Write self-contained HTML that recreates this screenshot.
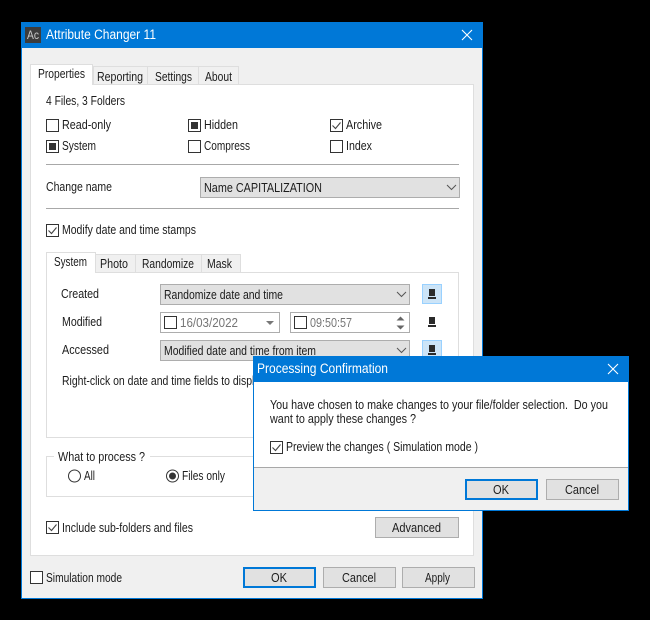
<!DOCTYPE html>
<html lang="en">
<head>
<meta charset="utf-8">
<title>Attribute Changer 11</title>
<style>
html,body{margin:0;padding:0;background:#000;width:650px;height:620px;overflow:hidden}
svg{display:block}
text{font-family:"Liberation Sans",sans-serif;font-size:12.5px;fill:#1c1c1c}
.g{fill:#757575}
.w{fill:#fff;font-size:13.5px}
.bx{fill:#fff;stroke:#333;stroke-width:1}
.ck{fill:none;stroke:#444;stroke-width:1.1}
.tab{fill:#f0f0f0;stroke:#dedede}
.btn{fill:#e1e1e1;stroke:#adadad}
.def{fill:#e1e1e1;stroke:#0078d7;stroke-width:2}
.chev{fill:none;stroke:#555;stroke-width:1}
.sep{stroke:#a8a8a8;stroke-width:1}
</style>
</head>
<body>
<svg width="650" height="620" viewBox="0 0 650 620" xmlns="http://www.w3.org/2000/svg">
<rect width="650" height="620" fill="#000"/>

<!-- main window -->
<rect x="21.500" y="22.500" width="461" height="576" fill="#f0f0f0" stroke="#0078d7"/>
<rect x="22" y="23" width="460" height="25" fill="#0078d7"/>
<rect x="25" y="27" width="16" height="16" fill="#3c3c3c"/>
<text x="27" y="39" style="font-size:12px;fill:#ccc" textLength="12" lengthAdjust="spacingAndGlyphs">Ac</text>
<text x="46" y="39" class="w" textLength="110" lengthAdjust="spacingAndGlyphs">Attribute Changer 11</text>
<path d="M462 30L472 40M472 30L462 40" stroke="#fff" stroke-width="1.1" fill="none"/>

<!-- main tabs -->
<rect x="93.500" y="66.500" width="54" height="18" class="tab"/>
<rect x="147.500" y="66.500" width="51" height="18" class="tab"/>
<rect x="198.500" y="66.500" width="40" height="18" class="tab"/>
<rect x="30.500" y="84.500" width="443" height="471" fill="#fff" stroke="#dedede"/>
<path d="M30.500 85V64.500H92.500V85" fill="#fff" stroke="#dedede"/>
<rect x="31" y="65" width="61" height="21" fill="#fff"/>
<text x="38" y="78" textLength="47" lengthAdjust="spacingAndGlyphs">Properties</text>
<text x="97" y="81" textLength="46" lengthAdjust="spacingAndGlyphs">Reporting</text>
<text x="155" y="81" textLength="37" lengthAdjust="spacingAndGlyphs">Settings</text>
<text x="205" y="81" textLength="27" lengthAdjust="spacingAndGlyphs">About</text>

<text x="46" y="105" textLength="79" lengthAdjust="spacingAndGlyphs">4 Files, 3 Folders</text>

<!-- attribute checks -->
<rect x="46.500" y="119.500" width="12" height="12" class="bx"/>
<text x="62" y="129" textLength="49" lengthAdjust="spacingAndGlyphs">Read-only</text>
<rect x="46.500" y="140.500" width="12" height="12" class="bx"/>
<rect x="49" y="143" width="7" height="7" fill="#333"/>
<text x="62" y="150" textLength="34" lengthAdjust="spacingAndGlyphs">System</text>
<rect x="188.500" y="119.500" width="12" height="12" class="bx"/>
<rect x="191" y="122" width="7" height="7" fill="#333"/>
<text x="204" y="129" textLength="34" lengthAdjust="spacingAndGlyphs">Hidden</text>
<rect x="188.500" y="140.500" width="12" height="12" class="bx"/>
<text x="204" y="150" textLength="46" lengthAdjust="spacingAndGlyphs">Compress</text>
<rect x="330.500" y="119.500" width="12" height="12" class="bx"/>
<path d="M332.500 125.500L335.500 128.500L340.500 122.500" class="ck"/>
<text x="346" y="129" textLength="36" lengthAdjust="spacingAndGlyphs">Archive</text>
<rect x="330.500" y="140.500" width="12" height="12" class="bx"/>
<text x="346" y="150" textLength="26" lengthAdjust="spacingAndGlyphs">Index</text>

<line x1="46" y1="164.500" x2="459" y2="164.500" class="sep"/>
<text x="46" y="191" textLength="66" lengthAdjust="spacingAndGlyphs">Change name</text>
<rect x="200.500" y="177.500" width="259" height="20" class="btn"/>
<text x="204" y="192" textLength="118" lengthAdjust="spacingAndGlyphs">Name CAPITALIZATION</text>
<path d="M447 185L451.500 189.500L456 185" class="chev"/>
<line x1="46" y1="208.500" x2="459" y2="208.500" class="sep"/>

<rect x="46.500" y="224.500" width="12" height="12" class="bx"/>
<path d="M48.500 230.500L51.500 233.500L56.500 227.500" class="ck"/>
<text x="62" y="234" textLength="134" lengthAdjust="spacingAndGlyphs">Modify date and time stamps</text>

<!-- inner tabs -->
<rect x="95.500" y="254.500" width="40" height="18" class="tab"/>
<rect x="135.500" y="254.500" width="66" height="18" class="tab"/>
<rect x="201.500" y="254.500" width="39" height="18" class="tab"/>
<rect x="46.500" y="272.500" width="412" height="165" fill="#fff" stroke="#dedede"/>
<path d="M46.500 273V252.500H95.500V273" fill="#fff" stroke="#dedede"/>
<rect x="47" y="253" width="48" height="21" fill="#fff"/>
<text x="54" y="266" textLength="33" lengthAdjust="spacingAndGlyphs">System</text>
<text x="100" y="268" textLength="28" lengthAdjust="spacingAndGlyphs">Photo</text>
<text x="142" y="268" textLength="52" lengthAdjust="spacingAndGlyphs">Randomize</text>
<text x="207" y="268" textLength="25" lengthAdjust="spacingAndGlyphs">Mask</text>

<text x="61" y="298" textLength="38" lengthAdjust="spacingAndGlyphs">Created</text>
<rect x="160.500" y="284.500" width="249" height="20" class="btn"/>
<text x="164" y="299" textLength="119" lengthAdjust="spacingAndGlyphs">Randomize date and time</text>
<path d="M397 292L401.500 296.500L406 292" class="chev"/>

<text x="62" y="326" textLength="40" lengthAdjust="spacingAndGlyphs">Modified</text>
<rect x="160.500" y="312.500" width="119" height="20" fill="#fff" stroke="#adadad"/>
<rect x="164.500" y="316.500" width="12" height="12" class="bx"/>
<text x="180" y="327" class="g" textLength="58" lengthAdjust="spacingAndGlyphs">16/03/2022</text>
<path d="M266 321H274L270 325Z" fill="#777"/>
<rect x="290.500" y="312.500" width="119" height="20" fill="#fff" stroke="#adadad"/>
<rect x="294.500" y="316.500" width="12" height="12" class="bx"/>
<text x="310" y="327" class="g" textLength="42" lengthAdjust="spacingAndGlyphs">09:50:57</text>
<path d="M396.500 320.500L400.500 316.500L404.500 320.500Z" fill="#666"/>
<path d="M396.500 325.500L400.500 329.500L404.500 325.500Z" fill="#666"/>

<text x="62" y="354" textLength="47" lengthAdjust="spacingAndGlyphs">Accessed</text>
<rect x="160.500" y="340.500" width="249" height="20" class="btn"/>
<text x="164" y="355" textLength="152" lengthAdjust="spacingAndGlyphs">Modified date and time from item</text>
<path d="M397 348L401.500 352.500L406 348" class="chev"/>

<!-- small icon buttons -->
<rect x="422.500" y="284.500" width="19" height="19" fill="#cce4f7" stroke="#99d1ff"/>
<rect x="429" y="289" width="6" height="7" fill="#2a2a2a"/>
<rect x="428" y="297" width="8" height="2" fill="#2a2a2a"/>
<rect x="429" y="317" width="6" height="7" fill="#2a2a2a"/>
<rect x="428" y="325" width="8" height="2" fill="#2a2a2a"/>
<rect x="422.500" y="340.500" width="19" height="19" fill="#cce4f7" stroke="#99d1ff"/>
<rect x="429" y="345" width="6" height="7" fill="#2a2a2a"/>
<rect x="428" y="353" width="8" height="2" fill="#2a2a2a"/>

<text x="62" y="385" textLength="240" lengthAdjust="spacingAndGlyphs">Right-click on date and time fields to display options</text>

<!-- group box -->
<rect x="46.500" y="456.500" width="412" height="40" fill="none" stroke="#dedede"/>
<rect x="54" y="450" width="96" height="12" fill="#fff"/>
<text x="58" y="461" textLength="87" lengthAdjust="spacingAndGlyphs">What to process ?</text>
<circle cx="74.500" cy="476" r="6" fill="#fff" stroke="#333"/>
<text x="84" y="480" textLength="11" lengthAdjust="spacingAndGlyphs">All</text>
<circle cx="172.500" cy="476" r="6" fill="#fff" stroke="#333"/>
<circle cx="172.500" cy="476" r="3.500" fill="#333"/>
<text x="182" y="480" textLength="43" lengthAdjust="spacingAndGlyphs">Files only</text>

<rect x="46.500" y="521.500" width="12" height="12" class="bx"/>
<path d="M48.500 527.500L51.500 530.500L56.500 524.500" class="ck"/>
<text x="62" y="532" textLength="131" lengthAdjust="spacingAndGlyphs">Include sub-folders and files</text>
<rect x="375.500" y="517.500" width="83" height="20" class="btn"/>
<text x="392" y="532" textLength="49" lengthAdjust="spacingAndGlyphs">Advanced</text>

<!-- footer -->
<rect x="30.500" y="571.500" width="12" height="12" class="bx"/>
<text x="46" y="582" textLength="76" lengthAdjust="spacingAndGlyphs">Simulation mode</text>
<rect x="244" y="568" width="71" height="19" class="def"/>
<text x="271" y="582" textLength="16" lengthAdjust="spacingAndGlyphs">OK</text>
<rect x="323.500" y="567.500" width="72" height="20" class="btn"/>
<text x="342" y="582" textLength="34" lengthAdjust="spacingAndGlyphs">Cancel</text>
<rect x="402.500" y="567.500" width="72" height="20" class="btn"/>
<text x="425" y="582" textLength="25" lengthAdjust="spacingAndGlyphs">Apply</text>

<!-- confirmation dialog -->
<rect x="253.500" y="356.500" width="375" height="154" fill="#f0f0f0" stroke="#0078d7"/>
<rect x="254" y="357" width="374" height="25" fill="#0078d7"/>
<text x="257" y="373" class="w" textLength="131" lengthAdjust="spacingAndGlyphs">Processing Confirmation</text>
<path d="M608 364L618 374M618 364L608 374" stroke="#fff" stroke-width="1.1" fill="none"/>
<rect x="254" y="382" width="374" height="85" fill="#fff"/>
<line x1="254" y1="467.500" x2="628" y2="467.500" class="sep"/>
<text x="270" y="409" textLength="338" lengthAdjust="spacingAndGlyphs" xml:space="preserve">You have chosen to make changes to your file/folder selection.  Do you</text>
<text x="270" y="423" textLength="146" lengthAdjust="spacingAndGlyphs">want to apply these changes ?</text>
<rect x="270.500" y="441.500" width="12" height="12" class="bx"/>
<path d="M272.500 447.500L275.500 450.500L280.500 444.500" class="ck"/>
<text x="286" y="451" textLength="192" lengthAdjust="spacingAndGlyphs">Preview the changes ( Simulation mode )</text>
<rect x="466" y="480" width="71" height="19" class="def"/>
<text x="493" y="494" textLength="16" lengthAdjust="spacingAndGlyphs">OK</text>
<rect x="546.500" y="479.500" width="72" height="20" class="btn"/>
<text x="565" y="494" textLength="34" lengthAdjust="spacingAndGlyphs">Cancel</text>
</svg>
</body>
</html>
